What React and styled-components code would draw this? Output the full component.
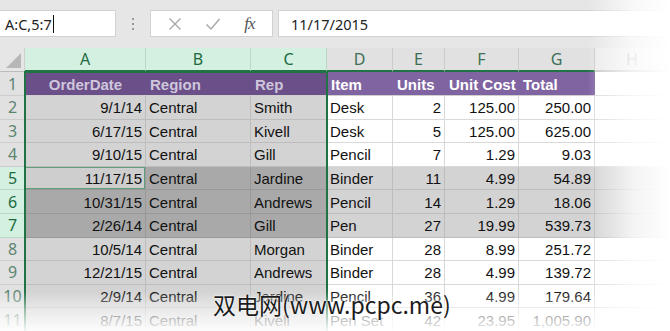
import styled, { createGlobalStyle } from "styled-components"

const Global = createGlobalStyle`
  html, body { margin: 0; padding: 0; background: #fff; }
  * { box-sizing: border-box; }
`

const Page = styled.div`
  position: relative;
  width: 670px;
  height: 331px;
  overflow: hidden;
  background: #e6e6e6;
  font-family: "Liberation Sans", Arial, sans-serif;
`

const TopBar = styled.div`
  display: flex;
  align-items: flex-start;
  height: 48px;
  padding-top: 10px;
`

const NameBox = styled.div`
  display: flex;
  align-items: center;
  width: 116px;
  height: 27px;
  padding-left: 5px;
  background: #fff;
  border: 1px solid #d2d2d2;
  border-left: none;
  font-family: "Noto Sans", "Open Sans", sans-serif;
  font-size: 14.5px;
  color: #222;
`

const Caret = styled.span`
  display: inline-block;
  width: 1px;
  height: 18px;
  margin-left: 1px;
  background: #111;
`

const Grip = styled.div`
  display: flex;
  flex-direction: column;
  align-items: center;
  justify-content: center;
  gap: 3px;
  width: 34px;
  height: 27px;
  span {
    width: 2px;
    height: 2px;
    background: #9a9a9a;
  }
`

const FxBox = styled.div`
  display: flex;
  align-items: center;
  justify-content: space-around;
  width: 123px;
  height: 27px;
  padding: 0 6px;
  background: #fff;
  border: 1px solid #d2d2d2;
`

const Fx = styled.span`
  font-family: "Liberation Serif", "Times New Roman", serif;
  font-style: italic;
  font-size: 17px;
  color: #555;
  letter-spacing: -1px;
`

const Formula = styled.div`
  display: flex;
  align-items: center;
  flex: 1;
  height: 27px;
  margin-left: 5px;
  padding-left: 12px;
  background: #fff;
  border: 1px solid #d2d2d2;
  border-right: none;
  font-family: "Noto Sans", "Open Sans", sans-serif;
  font-size: 14.5px;
  color: #222;
`

const Sheet = styled.div`
  position: relative;
  display: grid;
  grid-template-columns: 25px 121px 105px 76px 66px 52px 74px 76px 1fr;
  grid-template-rows: 24px 24px repeat(10, 23.6px);
  background: #fff;
`

const Corner = styled.div`
  position: relative;
  background: #e6e6e6;
  border-right: 1px solid #cfcfcf;
  border-bottom: 1px solid #bcbcbc;
  &::after {
    content: "";
    position: absolute;
    right: 3px;
    bottom: 3px;
    width: 0;
    height: 0;
    border-left: 15px solid transparent;
    border-bottom: 15px solid #b7b7b7;
  }
`

const ColHead = styled.div`
  display: flex;
  align-items: center;
  justify-content: center;
  font-family: "Noto Sans", "Open Sans", sans-serif;
  font-size: 16px;
  background: ${p => (p.$sel ? "#d3f0e0" : p.$faint ? "#ececec" : "#e1e1e1")};
  color: ${p => (p.$sel ? "#1e6b42" : p.$faint ? "#a9b5ae" : "#3e6f55")};
  border-right: 1px solid ${p => (p.$sel ? "#b9d9c6" : "#cbcbcb")};
  border-bottom: 2px solid ${p => (p.$faint ? "#c8c8c8" : "#217346")};
`

const RowHead = styled.div`
  display: flex;
  align-items: center;
  justify-content: center;
  font-family: "Noto Sans", "Open Sans", sans-serif;
  font-size: 16px;
  background: ${p => (p.$sel ? "#d3f0e0" : "#e1e1e1")};
  color: ${p => (p.$sel ? "#1e6b42" : "#5c8571")};
  border-bottom: 1px solid ${p => (p.$sel ? "#b9d9c6" : "#cdcdcd")};
`

const shadeBg = ["#ffffff", "#d3d3d3", "#a9a9a9"]
const shadeLine = ["#d9d9d9", "#bdbdbd", "#999999"]

const Cell = styled.div`
  display: flex;
  align-items: center;
  justify-content: ${p => (p.$align === "right" ? "flex-end" : p.$align === "center" ? "center" : "flex-start")};
  padding: 1px 3px 0 3px;
  font-size: 15px;
  color: #111;
  white-space: nowrap;
  overflow: hidden;
  background: ${p => shadeBg[p.$shade]};
  border-right: 1px solid ${p => shadeLine[p.$shade]};
  border-bottom: 1px solid ${p => shadeLine[p.$shade]};
`

const ActiveCell = styled(Cell)`
  background: #cecece;
  box-shadow: inset 0 0 0 1px #5f9f7b;
`

const HeadCell = styled.div`
  display: flex;
  align-items: center;
  justify-content: ${p => (p.$center ? "center" : "flex-start")};
  padding: 1px 4px 0 4px;
  font-size: 15px;
  font-weight: bold;
  white-space: nowrap;
  background: ${p => (p.$sel ? "#6a4f89" : "#8064a2")};
  color: ${p => (p.$sel ? "#cfc6dc" : "#ffffff")};
  border-bottom: 1px solid #cfcfcf;
`

const BlankHead = styled.div`
  background: #fff;
  border-bottom: 1px solid #d9d9d9;
`

const SelectionFrame = styled.div`
  position: absolute;
  left: 24px;
  top: 23px;
  width: 304px;
  height: 300px;
  border: 2px solid #217346;
  border-bottom: none;
  pointer-events: none;
`

const FadeRight = styled.div`
  position: absolute;
  top: 0;
  right: 0;
  width: 82px;
  height: 100%;
  background: linear-gradient(to right, rgba(255, 255, 255, 0) 0%, rgba(255, 255, 255, 0.75) 55%, #fff 100%);
  pointer-events: none;
`

const FadeBottom = styled.div`
  position: absolute;
  left: 0;
  right: 0;
  bottom: 0;
  height: 40px;
  background: linear-gradient(to bottom, rgba(255, 255, 255, 0) 0%, rgba(255, 255, 255, 0.55) 50%, rgba(255, 255, 255, 0.95) 100%);
  pointer-events: none;
`

const Watermark = styled.div`
  position: absolute;
  left: 213px;
  top: 287px;
  font-family: "Noto Sans CJK SC", "Noto Sans", sans-serif;
  font-size: 23px;
  color: #1c1c1c;
  text-shadow: 0 0 2px #fff, 0 0 2px #fff;
  white-space: nowrap;
`

const headers = ["OrderDate", "Region", "Rep", "Item", "Units", "Unit Cost", "Total"]
const letters = ["A", "B", "C", "D", "E", "F", "G", "H"]

const rows = [
  ["9/1/14", "Central", "Smith", "Desk", "2", "125.00", "250.00"],
  ["6/17/15", "Central", "Kivell", "Desk", "5", "125.00", "625.00"],
  ["9/10/15", "Central", "Gill", "Pencil", "7", "1.29", "9.03"],
  ["11/17/15", "Central", "Jardine", "Binder", "11", "4.99", "54.89"],
  ["10/31/15", "Central", "Andrews", "Pencil", "14", "1.29", "18.06"],
  ["2/26/14", "Central", "Gill", "Pen", "27", "19.99", "539.73"],
  ["10/5/14", "Central", "Morgan", "Binder", "28", "8.99", "251.72"],
  ["12/21/15", "Central", "Andrews", "Binder", "28", "4.99", "139.72"],
  ["2/9/14", "Central", "Jardine", "Pencil", "36", "4.99", "179.64"],
  ["8/7/15", "Central", "Kivell", "Pen Set", "42", "23.95", "1,005.90"],
]

const aligns = ["right", "left", "left", "left", "right", "right", "right"]

function CrossIcon() {
  return (
    <svg width="14" height="14" viewBox="0 0 14 14">
      <path d="M1.5 1.5 L12.5 12.5 M12.5 1.5 L1.5 12.5" stroke="#a9a9a9" strokeWidth="1.4" fill="none" />
    </svg>
  )
}

function CheckIcon() {
  return (
    <svg width="16" height="14" viewBox="0 0 16 14">
      <path d="M1.5 7.5 L6 12 L14.5 2" stroke="#a9a9a9" strokeWidth="1.5" fill="none" />
    </svg>
  )
}

function App() {
  return (
    <Page>
      <Global />
      <TopBar>
        <NameBox>
          A:C,5:7<Caret />
        </NameBox>
        <Grip>
          <span />
          <span />
          <span />
        </Grip>
        <FxBox>
          <CrossIcon />
          <CheckIcon />
          <Fx>fx</Fx>
        </FxBox>
        <Formula>11/17/2015</Formula>
      </TopBar>

      <Sheet>
        <Corner />
        {letters.map((l, i) => (
          <ColHead key={l} $sel={i < 3} $faint={i === 7}>
            {l}
          </ColHead>
        ))}

        <RowHead>1</RowHead>
        {headers.map((h, i) => (
          <HeadCell key={h} $sel={i < 3} $center={i === 0}>
            {h}
          </HeadCell>
        ))}
        <BlankHead />

        {rows.map((r, ri) => {
          const rowSel = ri >= 3 && ri <= 5
          return [
            <RowHead key={"h" + ri} $sel={rowSel}>
              {ri + 2}
            </RowHead>,
            ...r.map((v, ci) => {
              const shade = (ci < 3 ? 1 : 0) + (rowSel ? 1 : 0)
              const C = ri === 3 && ci === 0 ? ActiveCell : Cell
              return (
                <C key={ri + "-" + ci} $shade={shade} $align={aligns[ci]}>
                  {v}
                </C>
              )
            }),
            <Cell key={"x" + ri} $shade={rowSel ? 1 : 0} />,
          ]
        })}

        <SelectionFrame />
      </Sheet>

      <FadeRight />
      <FadeBottom />
      <Watermark>双电网(www.pcpc.me)</Watermark>
    </Page>
  )
}

export default App
